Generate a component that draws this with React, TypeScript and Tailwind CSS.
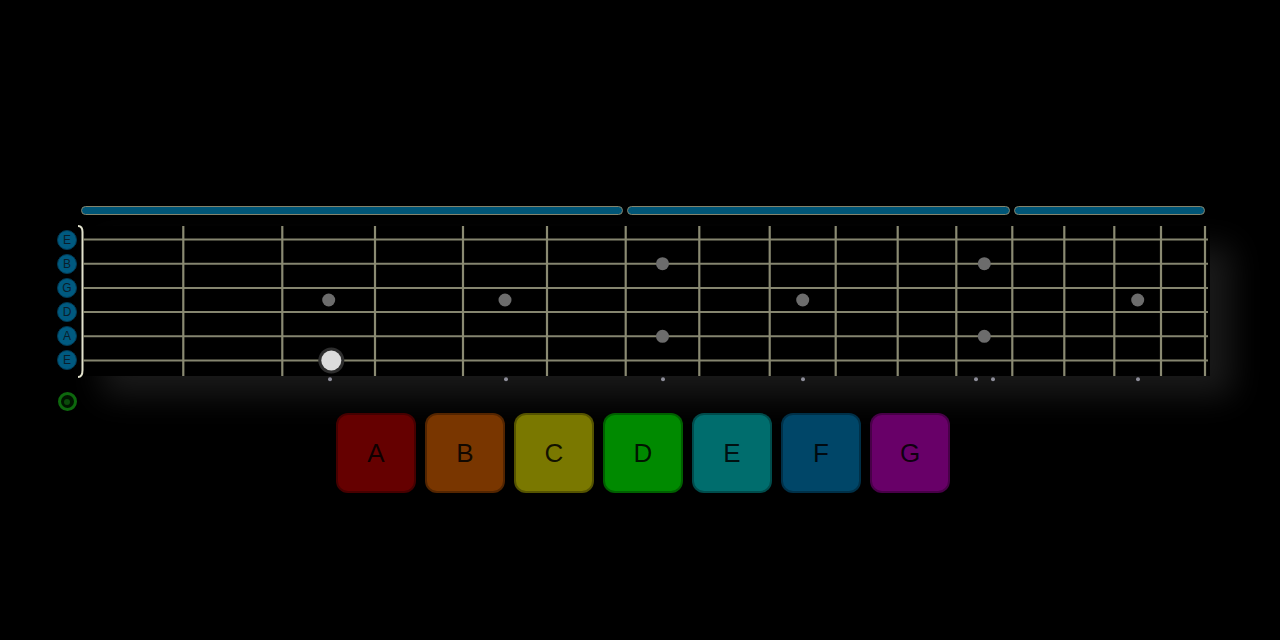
import React from "react";

const strings = ["E", "B", "G", "D", "A", "E"];
const frets = [183.3, 282.3, 375, 463, 547, 625.7, 699.3, 769.7, 835.7, 897.7, 956.3, 1012.3, 1064.3, 1114.3, 1161, 1205];
const stringY = strings.map((_, i) => 239.5 + i * 24.2);

// inlay markers on the board, and the small side markers under it
const inlays: [number, number][] = [
  [328.7, 300], [505, 300], [662.5, 263.7], [662.5, 336.3], [802.7, 300],
  [984.3, 263.7], [984.3, 336.3], [1137.7, 300],
];
const sideDots = [330, 506, 663, 803, 976, 993, 1138];

const notes = [
  {name: "A", bg: "bg-[#650000]"},
  {name: "B", bg: "bg-[#793600]"},
  {name: "C", bg: "bg-[#7a7800]"},
  {name: "D", bg: "bg-[#008a00]"},
  {name: "E", bg: "bg-[#006d6d]"},
  {name: "F", bg: "bg-[#004668]"},
  {name: "G", bg: "bg-[#680068]"},
];

const Bar = ({w}: { w: string }) => (
  <div className={`${w} h-[9px] rounded-full border border-[#84846c] bg-[#005576]`}/>
);

const Fretboard = () => (
  <div className="w-[1130px] h-[150px] bg-black shadow-[22px_20px_30px_rgba(255,255,255,0.1)]">
    <svg width="1134" height="150" viewBox="78 226 1134 150" className="overflow-visible -ml-[2px]">
      <path d="M78 226 Q82.5 226 82.5 232 L82.5 370 Q82.5 377 78 377" fill="none" stroke="#e2e2cc" strokeWidth="2"/>
      {stringY.map(y => (
        <line key={y} x1="83" x2="1208" y1={y} y2={y} stroke="#85856f" strokeWidth="2"/>
      ))}
      {frets.map(x => (
        <line key={x} x1={x} x2={x} y1="226" y2="376" stroke="#8a8a72" strokeWidth="2.2"/>
      ))}
      {inlays.map(([x, y]) => (
        <circle key={`${x}-${y}`} cx={x} cy={y} r="6.5" fill="#6c6c6c"/>
      ))}
      {sideDots.map(x => (
        <circle key={x} cx={x} cy="379.3" r="2" fill="#8e8e9a"/>
      ))}
      <circle cx="331.3" cy="360.5" r="13" fill="#2e2e2e"/>
      <circle cx="331.3" cy="360.5" r="10" fill="#dcdcdc"/>
    </svg>
  </div>
);

export default function App() {
  return (
    <div className="w-[1280px] h-[640px] bg-black overflow-hidden font-['Liberation_Sans',Arial,sans-serif]">
      <div className="pt-[206px] pl-[81px] flex gap-[4px]">
        <Bar w="w-[542px]"/>
        <Bar w="w-[383px]"/>
        <Bar w="w-[191px]"/>
      </div>

      <div className="flex mt-[11px] pl-[57px]">
        <div className="flex flex-col gap-[4.2px] pt-[3.5px] w-[20px] mr-[3px]">
          {strings.map((s, i) => (
            <div key={i}
                 className="w-[20px] h-[20px] rounded-full bg-[#005a80] border border-[#003a55] flex items-center justify-center text-[12px] leading-none text-[#0a1e2c]">
              {s}
            </div>
          ))}
        </div>
        <Fretboard/>
      </div>

      <div className="mt-[16px] ml-[57.5px] w-[19px] h-[19px] rounded-full border-[3px] border-[#0d680d] bg-[#001400] flex items-center justify-center">
        <div className="w-[6px] h-[6px] rounded-full bg-[#0a4a0a]"/>
      </div>

      <div className="flex justify-center gap-[9px] pl-[6px] mt-[2px]">
        {notes.map(n => (
          <button key={n.name}
                  className={`${n.bg} w-[80px] h-[80px] rounded-[12px] border-2 border-black/30 flex items-center justify-center text-[26px] text-black/85`}>
            {n.name}
          </button>
        ))}
      </div>
    </div>
  );
}
